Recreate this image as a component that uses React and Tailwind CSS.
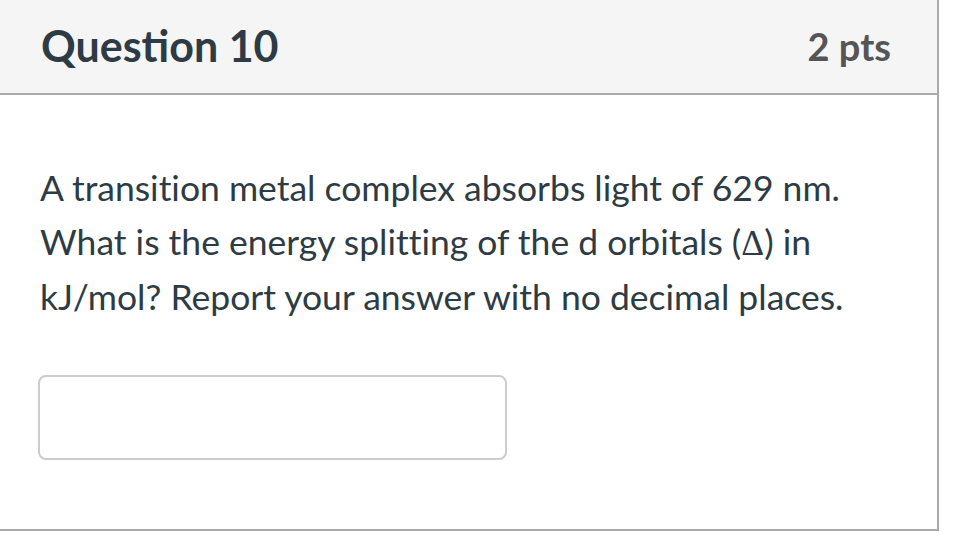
import React from 'react';

export default function App() {
  return (
    <div className="w-[956px] h-[548px] bg-white overflow-hidden" style={{ fontFamily: 'Lato, "Open Sans", sans-serif' }}>
      <div className="w-[939px] border-r-2 border-b-2 border-[#aaaaaa]">
        {/* header */}
        <div className="h-[95px] bg-[#f5f5f5] border-b-2 border-[#aaaaaa] flex items-center justify-between pl-[41px] pr-[46px]">
          <h2 className="text-[43px] font-bold text-[#2d3b45]">Question 10</h2>
          <span className="text-[38px] font-bold text-[#555555]">2 pts</span>
        </div>

        {/* body */}
        <div className="pl-[40px] pt-[66px] pb-[69px]">
          <p className="text-[35.5px] leading-[54px] text-[#2d3b45] w-[860px] [font-variant-ligatures:none]">
            A transition metal complex absorbs light of 629 nm. What is the energy splitting of the d orbitals (<span className="font-['Liberation_Serif',serif]">Δ</span>) in kJ/mol? Report your answer with no decimal places.
          </p>
          <input
            type="text"
            className="mt-[51px] block w-[469px] h-[85px] border-2 border-[#cccccc] rounded-[8px] outline-none -ml-[2px]"
          />
        </div>
      </div>
    </div>
  );
}
